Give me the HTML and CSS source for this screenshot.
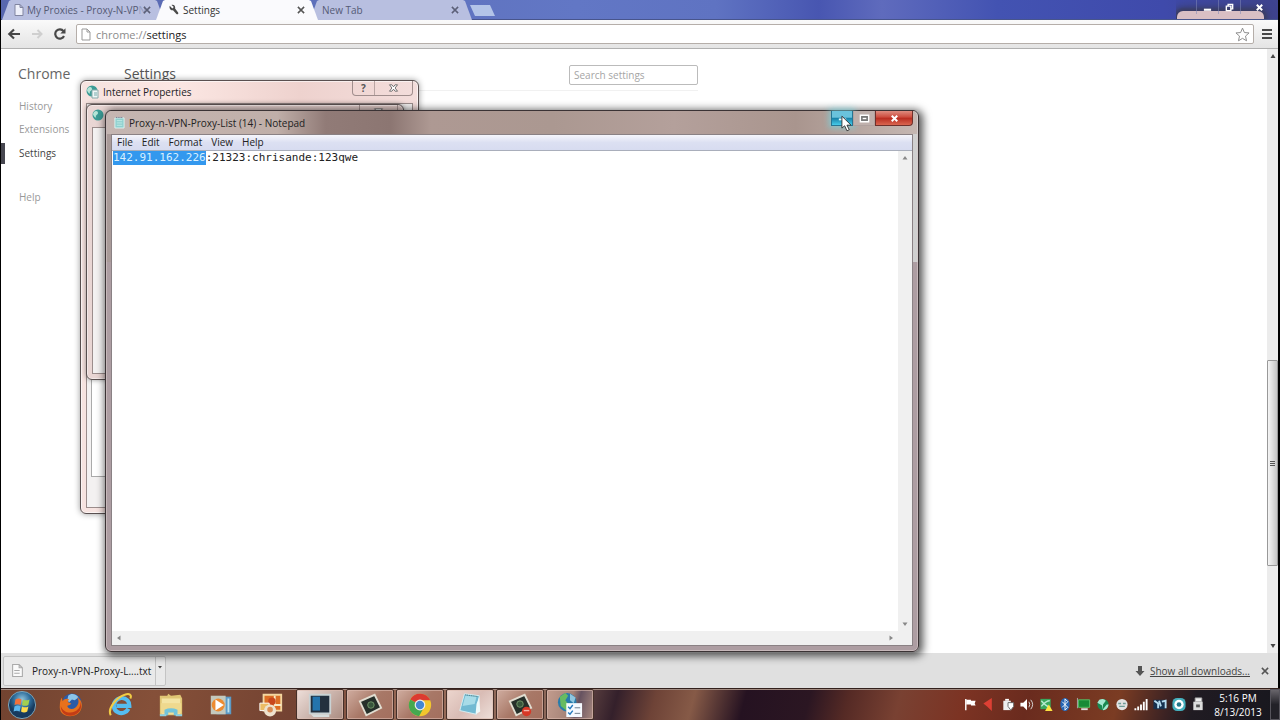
FILE: index.html
```html
<!DOCTYPE html>
<html lang="en">
<head>
<meta charset="utf-8">
<title>Settings</title>
<link rel="stylesheet" href="styles.css">
</head>
<body>
<div class="desktop">
  <main class="browser">
    <header class="tabstrip">
      <div class="tab tab-first">
        <svg class="tab-icon" viewBox="0 0 10 12"><path d="M1 .5h5l3 3v8H1zM6 .5v3h3" fill="#eef0fa" stroke="#8185a0"/></svg>
        <span class="tab-label">My Proxies - Proxy-N-VP<span class="faded">N</span></span>
        <button class="tab-close" aria-label="Close tab"><svg viewBox="0 0 8 8"><path d="M1.500 1.500l5 5M6.500 1.500l-5 5" stroke="#5c6078" stroke-width="1.200"/></svg></button>
      </div>
      <div class="tab active">
        <svg class="tab-icon" viewBox="0 0 10 12"><path d="M1.200 1.800L3.800 4.400 5.300 3 3 .9C5.200.2 7.300 2 6.600 4.600L9.600 8.500c.8 1.200-.6 2.500-1.700 1.500L4.500 6.300C2.300 6.800.4 4.600 1.200 1.800z" fill="#4b4b4b"/></svg>
        <span class="tab-label">Settings</span>
        <button class="tab-close" aria-label="Close tab"><svg viewBox="0 0 8 8"><path d="M1.500 1.500l5 5M6.500 1.500l-5 5" stroke="#555" stroke-width="1.200"/></svg></button>
      </div>
      <div class="tab">
        <span class="tab-label">New Tab</span>
        <button class="tab-close" aria-label="Close tab"><svg viewBox="0 0 8 8"><path d="M1.500 1.500l5 5M6.500 1.500l-5 5" stroke="#5c6078" stroke-width="1.200"/></svg></button>
      </div>
      <button class="new-tab" aria-label="New tab"></button>
      <div class="caption">
        <button aria-label="Minimize"><svg viewBox="0 0 10 10"><path d="M1 7.500h8" stroke="#fff" stroke-width="2.400"/></svg></button>
        <button aria-label="Restore"><svg viewBox="0 0 10 10"><path d="M3.500 3V1.500h5v5H7M1.500 3.500h5v5h-5z" fill="none" stroke="#fff" stroke-width="1.600"/></svg></button>
        <button aria-label="Close"><svg viewBox="0 0 10 10"><path d="M2 2l6 6M8 2L2 8" stroke="#fff" stroke-width="2.200"/></svg></button>
      </div>
    </header>
    <nav class="toolbar">
      <button class="tool" aria-label="Back"><svg viewBox="0 0 14 12"><path d="M13 6H3M7 1.500L2.300 6 7 10.500" fill="none" stroke="#454545" stroke-width="2.200"/></svg></button>
      <button class="tool" aria-label="Forward"><svg viewBox="0 0 14 12"><path d="M2 6h9M7.500 2l4 4-4 4" fill="none" stroke="#cfcfcf" stroke-width="2"/></svg></button>
      <button class="tool" aria-label="Reload"><svg viewBox="0 0 14 12"><path d="M10.500 3.200A4.600 4.600 0 1 0 11 8" fill="none" stroke="#484848" stroke-width="2.200"/><path d="M12.500.3v5.200H7.300z" fill="#484848"/></svg></button>
      <label class="omnibox">
        <svg viewBox="0 0 10 12"><path d="M1 .5h5l3 3v8H1zM6 .5v3h3" fill="#fff" stroke="#999"/></svg>
        <span class="address"><span class="scheme">chrome://</span>settings</span>
        <svg class="star" viewBox="0 0 16 16"><path d="M8 1.200l2 4.700 5 .4-3.800 3.400 1.100 5L8 12.100l-4.300 2.600 1.100-5L1 6.300l5-.4z" fill="#fff" stroke="#888"/></svg>
      </label>
      <button class="tool menu" aria-label="Menu"><svg viewBox="0 0 12 12"><path d="M1 2h10M1 6h10M1 10h10" stroke="#484848" stroke-width="2"/></svg></button>
    </nav>
    <section class="page">
      <aside class="sidebar">
        <h2>Chrome</h2>
        <a href="#history">History</a>
        <a href="#extensions">Extensions</a>
        <a href="#settings" class="current">Settings</a>
        <a href="#help" class="help">Help</a>
      </aside>
      <div class="content">
        <div class="content-head">
          <h1>Settings</h1>
          <input type="search" placeholder="Search settings" aria-label="Search settings">
        </div>
      </div>
      <div class="page-scroll">
        <svg class="arrow" viewBox="0 0 8 8"><path d="M4 2l2.500 4h-5z" fill="#444"/></svg>
        <div class="track-top"></div>
        <div class="thumb"><i></i></div>
        <div class="track-bottom"></div>
        <svg class="arrow" viewBox="0 0 8 8"><path d="M4 6l2.500-4h-5z" fill="#444"/></svg>
      </div>
    </section>
    <footer class="shelf">
      <div class="download">
        <button class="download-file"><svg viewBox="0 0 10 12"><path d="M.5.5h6l3 3v8h-9zM6.500.5v3h3M2 6h5M2 8.500h5" fill="#fafafa" stroke="#aaa"/></svg>Proxy-n-VPN-Proxy-L....txt</button>
        <button class="download-more" aria-label="Download options"><svg viewBox="0 0 8 8"><path d="M2 3h4L4 5.500z" fill="#444"/></svg></button>
      </div>
      <div class="shelf-right">
        <svg viewBox="0 0 10 12"><path d="M3 1h4v5h2.500L5 11 .5 6H3z" fill="#555"/></svg>
        <a href="#downloads">Show all downloads...</a>
        <button class="tab-close" aria-label="Close downloads bar"><svg viewBox="0 0 8 8"><path d="M1.500 1.500l5 5M6.500 1.500l-5 5" stroke="#555" stroke-width="1.200"/></svg></button>
      </div>
    </footer>

    <section class="window props">
      <div class="window-title">
        <svg class="globe" viewBox="0 0 14 14"><circle cx="6" cy="6" r="5.500" fill="#3c9c96"/><path d="M2 3c2-2 4-1 4 1s-3 2-2 4-3-1-3-3z" fill="#b6e5d8"/><path d="M6 5h6v8H6z" fill="#eef6f6" stroke="#8aa"/><path d="M8 8h3M8 10h3" stroke="#7aa"/></svg>
        <h3>Internet Properties</h3>
        <div class="dialog-buttons"><button class="question" aria-label="Help">?</button><button aria-label="Close"><svg viewBox="0 0 12 10"><path d="M1 1h3l2 2.500L8 1h3L8 5l3 4H8L6 6.500 4 9H1l3-4z" fill="#fff" stroke="#555"/></svg></button></div>
      </div>
      <div class="window-body"><div class="sheet"></div></div>
    </section>

    <section class="window lan" aria-label="Dialog">
      <div class="window-title">
        <svg class="globe" viewBox="0 0 14 14"><circle cx="6" cy="6" r="5.500" fill="#3c9c96"/><path d="M2 3c2-2 4-1 4 1s-3 2-2 4-3-1-3-3z" fill="#b6e5d8"/></svg>
        <div class="dialog-buttons"><button aria-label="Close"><svg viewBox="0 0 12 10"><path d="M1 1h10L6 6z" fill="#fff" stroke="#555"/></svg></button></div>
      </div>
      <div class="window-body"></div>
    </section>

    <section class="window notepad">
      <div class="window-title">
        <svg class="note-icon" viewBox="0 0 12 14"><path d="M1 2h10v11H1z" fill="#8fd0cf" stroke="#dff5f2"/><path d="M2 1.500h8" stroke="#557" stroke-dasharray="1 1"/><path d="M3 5h6M3 7.500h6M3 10h6" stroke="#c4ebe6"/></svg>
        <h3>Proxy-n-VPN-Proxy-List (14) - Notepad</h3>
        <div class="note-buttons">
          <button class="min" aria-label="Minimize"><svg viewBox="0 0 12 12"><path d="M2 7h8" stroke="#e4fbff" stroke-width="2"/></svg></button>
          <button class="max" aria-label="Maximize"><svg viewBox="0 0 12 12"><path d="M1.500 2.500h9v7h-9z" fill="#777" stroke="#fff" stroke-width="1.500"/><path d="M4 6h4" stroke="#fff" stroke-width="1.500"/></svg></button>
          <button class="close" aria-label="Close"><svg viewBox="0 0 12 12"><path d="M3 3l6 6M9 3L3 9" stroke="#fff" stroke-width="2.200"/></svg></button>
        </div>
      </div>
      <div class="note-inner">
        <div class="menubar"><button>File</button><button>Edit</button><button>Format</button><button>View</button><button>Help</button></div>
        <div class="editor">
          <textarea id="note" aria-label="Text" spellcheck="false">142.91.162.226:21323:chrisande:123qwe</textarea>
          <div class="vbar"><svg viewBox="0 0 8 8"><path d="M4 2l2.500 3.500h-5z" fill="#888"/></svg><svg viewBox="0 0 8 8"><path d="M4 6l2.500-3.500h-5z" fill="#888"/></svg></div>
          <div class="hbar"><svg viewBox="0 0 8 8"><path d="M2 4l3.500-2.500v5z" fill="#888"/></svg><svg viewBox="0 0 8 8"><path d="M6 4L2.500 1.500v5z" fill="#888"/></svg></div>
          <div class="grip"></div>
        </div>
      </div>
    </section>
    <svg class="cursor" viewBox="0 0 12 18"><path d="M1 1v13l3-2.500L6.500 17l2.500-1.200-2.500-5H11z" fill="#fff" stroke="#333"/></svg>
  </main>

  <footer class="taskbar">
    <button class="start" aria-label="Start"><svg viewBox="0 0 32 32"><defs><radialGradient id="orb" cy=".3"><stop offset="0" stop-color="#8fc4dd"/><stop offset=".6" stop-color="#2e6d9b"/><stop offset="1" stop-color="#173a5e"/></radialGradient></defs><circle cx="16" cy="16" r="14.500" fill="url(#orb)" stroke="#7da7bd"/><path d="M9 10q3.500-2 6.500 0l-1 6q-3-1.500-6.500 0z" fill="#f2713a"/><path d="M17 10q3.500 1.800 7 0l-1.200 6q-3.500 1.800-6.800 0z" fill="#a3cf4f"/><path d="M8 17.500q3.500-1.800 6.500 0l-1 5.500q-3-1.500-6.500 0z" fill="#5cb7ee"/><path d="M16 17.500q3.500 1.800 6.800 0l-1.200 5.500q-3.500 1.800-6.600 0z" fill="#ffd94b"/></svg></button>
    <button class="pin" aria-label="Firefox"><svg viewBox="0 0 28 28"><circle cx="15" cy="12" r="10.500" fill="#2c5ba7"/><path d="M11 4c3-3 9-2 11 2l-4 3-3-1-3 3-2-2z" fill="#8cc4e8"/><path d="M4 6l1 4c2-3 5-3 7-2-1 1-2 2-1 3 2 1 4 1 3 2-2 2-3 1-4 2 1 4 8 5 11-1 2-3 1-7-1-9 5 3 7 8 5 13-2 6-7 8-12 8C5 26 1 21 2 14c0-3 1-6 2-8z" fill="#e8711c"/><path d="M3 15c2 6 9 9 15 6 5-2 7-7 6-11 3 7-1 15-10 15.500C7 26 3 21 3 15z" fill="#c33c16"/></svg></button>
    <button class="pin" aria-label="Internet Explorer"><svg viewBox="0 0 28 28"><path d="M22 18c-2 4-7 6-11 4-5-2-6-8-3-12s9-5 13-1c2 2 2 4 2 6H9" fill="none" stroke="#55bdf0" stroke-width="4.500"/><path d="M3 25C-1 18 9 6 18 3c5-2 8 0 6 4" fill="none" stroke="#f2cc45" stroke-width="2.200"/></svg></button>
    <button class="pin" aria-label="Explorer"><svg viewBox="0 0 28 28"><path d="M2 4h8l1-2 3 2 10-1 2 4v18H2z" fill="#e0c574"/><path d="M4 7h20v17H4z" fill="#f4e4a4"/><path d="M3 12h22v11H3z" fill="#efd98e"/><path d="M7 25v-6q7-3 14 0v6h-4v-3h-6v3z" fill="#72c4da"/><path d="M2 25h7M19 25h7" stroke="#8ccfe0" stroke-width="2"/></svg></button>
    <button class="pin" aria-label="Media Player"><svg viewBox="0 0 28 28"><path d="M9 5h16v19H9z" fill="#5b9ac6"/><path d="M21 7h2v15h-2z" fill="#bde0ee"/><path d="M3 4h16v20H3z" fill="#c4c9bd"/><circle cx="11" cy="14" r="7" fill="#ed8b30"/><path d="M8 8l9 6-9 6z" fill="#fff"/></svg></button>
    <button class="pin" aria-label="Office"><svg viewBox="0 0 28 28"><path d="M6 3h19v17H6z" fill="#dc6d24" stroke="#f3d69f" stroke-width="2"/><path d="M18 4v10h7" fill="none" stroke="#f8e9c8" stroke-width="2"/><circle cx="15" cy="10" r="4" fill="#c9471d"/><path d="M2 12h10v8H2z" fill="#ecbc65" stroke="#fff"/><circle cx="13" cy="20" r="6.500" fill="#eee2ce"/><circle cx="13" cy="19" r="3" fill="#d88c55"/></svg></button>
    <div class="running">
      <button class="task light" aria-label="Remote desktop"><svg viewBox="0 0 28 28"><path d="M3 3h22v20H3z" fill="#23303e" stroke="#c9d2d4" stroke-width="2"/><path d="M6 5h8v15H6z" fill="#2474ad"/><path d="M4 24h20v3H7z" fill="#d7dedd"/></svg></button>
      <button class="task" aria-label="Proxy tool"><svg viewBox="0 0 28 28"><path d="M3 10L19 3l7 14-16 8z" fill="#26302a" stroke="#e1ddd0" stroke-width="2"/><circle cx="15" cy="14" r="3.500" fill="#37553b" stroke="#719669"/></svg></button>
      <button class="task" aria-label="Chrome"><svg viewBox="0 0 28 28"><circle cx="14" cy="14" r="12" fill="#f2c72e"/><path d="M14 14L3.500 8A12 12 0 0 1 25 9H14z" fill="#dc3a31"/><path d="M14 14L3.500 8A12 12 0 0 0 13 26l5-9z" fill="#45a850"/><circle cx="14" cy="14" r="5.800" fill="#eee"/><circle cx="14" cy="14" r="4.500" fill="#4387d2"/></svg></button>
      <button class="task current" aria-label="Notepad"><svg viewBox="0 0 28 28"><path d="M8 2l16 2-3 20-18-4z" fill="#72bad2" stroke="#d5f0f4"/><path d="M9 4l12 1-2 8-13 2z" fill="#a8dce8"/><path d="M20 24l5-3-1-16-3 8z" fill="#eefafa"/><path d="M9 3l14 2" stroke="#577" stroke-dasharray="1 1"/></svg></button>
      <button class="task" aria-label="Proxy recorder"><svg viewBox="0 0 28 28"><path d="M3 10L19 3l7 14-16 8z" fill="#26302a" stroke="#e1ddd0" stroke-width="2"/><circle cx="14" cy="13" r="3.500" fill="#37553b" stroke="#719669"/><circle cx="21" cy="21" r="5" fill="#d73826"/><path d="M18 20h6" stroke="#f6b3a8" stroke-width="1.500"/></svg></button>
      <button class="task dark" aria-label="Internet properties"><svg viewBox="0 0 28 28"><circle cx="11" cy="11" r="10" fill="#287cab"/><path d="M3 5l6-4 3 3-3 5 4 5-3 6-6-5z" fill="#67bb61"/><path d="M14 2l6 4-2 6-4-3z" fill="#8fc6df"/><path d="M10 12h17v15H10z" fill="#f6faff"/><path d="M12 16l2 2 3-4M12 22l2 2 3-4" fill="none" stroke="#2479bd" stroke-width="1.500"/><path d="M19 17h6M19 23h6" stroke="#678"/></svg></button>
    </div>
    <div class="tray">
      <svg viewBox="0 0 16 16"><path d="M3.500 2v12" stroke="#fff" stroke-width="1.500"/><path d="M4 3h5v1h5l-1 3 1 2H9V8H4z" fill="#fff"/></svg>
      <svg viewBox="0 0 16 16"><path d="M11 1L2 7l4 3 5 5z" fill="#dc4034"/></svg>
      <svg viewBox="0 0 16 16"><path d="M3 4h8v10H3z" fill="#eee"/><path d="M5 2h4v2H5z" fill="#fff"/><path d="M8 6h6v4l-3 4-3-4z" fill="#fff" stroke="#666"/></svg>
      <svg viewBox="0 0 16 16"><path d="M1 6h3l4-4v12l-4-4H1z" fill="#fff"/><path d="M10 5q2 3 0 6M12 3q4 5 0 10" fill="none" stroke="#ddd"/></svg>
      <svg viewBox="0 0 16 16"><path d="M2 2h11v11H2z" fill="#38a85e"/><path d="M3 4q5 6 9 7M3 10q5-6 9-6" fill="none" stroke="#b6ead0" stroke-width="1.500"/><path d="M11 8l4 7H7z" fill="#ffe23f"/></svg>
      <svg viewBox="0 0 16 16"><ellipse cx="8" cy="8" rx="5" ry="7" fill="#2464b4"/><path d="M5 5l6 6-3 3V2l3 3-6 6" fill="none" stroke="#fff"/></svg>
      <svg viewBox="0 0 16 16"><path d="M2 3h12v8H2z" fill="#178a36" stroke="#57c66b"/><path d="M5 13h7" stroke="#ddd" stroke-width="2"/><path d="M1 1v11" stroke="#aaa"/></svg>
      <svg viewBox="0 0 16 16"><circle cx="8" cy="8" r="6" fill="#198951"/><path d="M4 3q5-2 7 1L8 8v5l4-5h2q-1 6-6 6l-1-5-5-3z" fill="#a6e8d0"/></svg>
      <svg viewBox="0 0 16 16"><circle cx="8" cy="8" r="6" fill="#e3e3e3"/><path d="M4 7h3M9 7h3M5 10h6" stroke="#6d9b96" stroke-width="1.500"/></svg>
      <svg viewBox="0 0 16 16"><path d="M2 14v-2M5 14v-4M8 14V8M11 14V5M14 14V2" stroke="#fff" stroke-width="2"/></svg>
      <svg viewBox="0 0 16 16"><path d="M1 3h13v10H1z" fill="#163150"/><path d="M2 4l4 3v5M7 4l2 6M10 5l4-1v8" fill="none" stroke="#b6dcf1" stroke-width="2"/></svg>
      <svg viewBox="0 0 16 16"><rect x="1" y="1" width="14" height="14" rx="5" fill="#44afbd"/><circle cx="8" cy="8" r="5" fill="#fff"/><circle cx="8" cy="8" r="2.500" fill="#23778a"/></svg>
      <svg viewBox="0 0 16 16"><path d="M5 1h7v4H5z" fill="#eee" stroke="#aaa"/><path d="M3 5h10v9H3z" fill="#ddd"/><path d="M6 8h4v3H6z" fill="#555"/></svg>
    </div>
    <div class="clock"><time>5:16 PM</time><time>8/13/2013</time></div>
    <button class="show-desktop" aria-label="Show desktop"></button>
  </footer>
</div>
<script src="app.js"></script>
</body>
</html>
```
FILE: styles.css
```css
* { box-sizing: border-box; }
body { margin: 0; background: #000; color: #222; font-family: "Open Sans", "Noto Sans", sans-serif; font-size: 10px; }
button { border: 0; padding: 0; background: none; color: inherit; font: inherit; }
svg { display: block; flex: none; }
h1, h2, h3 { margin: 0; font-weight: 400; }
h3 { font-size: 10px; line-height: 14px; }
a { color: inherit; }

.desktop { display: flex; flex-direction: column; height: 100vh; overflow: hidden; }
.browser { position: relative; flex: 1; min-height: 0; display: flex; flex-direction: column; margin: 0 2px 0 1px; background: #fff; }

.tabstrip { display: flex; height: 20px; padding-left: 1px; background: linear-gradient(90deg, #5867ae, #6277c5 45%, #5f73c2 56%, #4856b1 64%, #5f6bbd 69%, #4353b2 78%, #3f4aab 91%, #3e438e); border-bottom: 1px solid #48558c; }
.tab { display: flex; align-items: center; gap: 4px; width: 162px; height: 20px; margin-right: -8px; padding: 0 12px; background: #b8bfe0; color: #555a75; clip-path: polygon(0 100%, 7px 5%, 9px 0, calc(100% - 9px) 0, calc(100% - 7px) 5%, 100% 100%); }
.tab.active { z-index: 1; background: #fafafd; color: #333; }
.tab-first { gap: 3px; }
.tab-icon { width: 10px; height: 12px; }
.tab.active .tab-icon { width: 11px; }
.tab-label { flex: 1; min-width: 0; white-space: nowrap; }
.faded { color: #959bbc; }
.tab-close { width: 10px; height: 10px; }
.tab-close svg { width: 10px; height: 10px; }
.new-tab { width: 25px; height: 11px; margin: 5px 0 0 6px; background: #b3c4e8; clip-path: polygon(0 0, 80% 0, 100% 100%, 20% 100%); }
.caption { position: relative; display: flex; width: 102px; margin-left: auto; padding-left: 20px; overflow: hidden; }
.caption::before { content: ""; position: absolute; inset: 11px 14px -8px 1px; border-radius: 6px; background: #d9bfc4; box-shadow: 0 0 3px 3px #3b3e66, 0 0 7px 6px #3b3e6688; }
.caption button { position: relative; display: grid; place-items: center; width: 22px; height: 14px; border-left: 1px solid #8289b588; }
.caption button:last-child { width: 38px; }
.caption svg { width: 9px; height: 9px; }

.toolbar { display: flex; align-items: center; height: 29px; padding: 0 3px 0 1px; background: linear-gradient(#fafafa, #e4e4e4); border-bottom: 1px solid #b0b0b0; }
.tool { display: grid; place-items: center; width: 23px; height: 24px; }
.tool svg { width: 14px; height: 12px; }
.omnibox { display: flex; flex: 1; align-items: center; gap: 5px; height: 20px; margin-left: 5px; padding: 0 3px 0 4px; background: #fff; border: 1px solid #b5aea9; border-radius: 2px; font-size: 11px; }
.omnibox svg { width: 10px; height: 13px; }
.omnibox .star { width: 15px; height: 15px; }
.address { flex: 1; }
.scheme { color: #8b8b8b; }
.menu { margin-left: 5px; width: 16px; }
.menu svg { width: 12px; }

.page { flex: 1; min-height: 0; display: flex; }
.sidebar { display: flex; flex-direction: column; gap: 5px; width: 123px; padding-top: 15px; color: #999; }
.sidebar h2 { padding-left: 17px; margin-bottom: 8px; color: #666; font-size: 14px; line-height: 20px; }
.sidebar a { padding-left: 18px; line-height: 18px; text-decoration: none; }
.sidebar .current { padding: 1px 0 2px 14px; border-left: 4px solid #474750; color: #444; }
.sidebar .help { margin-top: 19px; }
.content { flex: 1; }
.content-head { display: flex; justify-content: space-between; width: 100%; max-width: 574px; height: 42px; padding-top: 15px; border-bottom: 1px solid #f1f1f1; }
.content-head h1 { color: #555; font-size: 14px; line-height: 20px; }
.content-head input { width: 129px; height: 20px; margin-top: 1px; padding: 0 4px; border: 1px solid #bbb; border-radius: 2px; background: #fff; font: inherit; appearance: none; }
.content-head input::placeholder { color: #a5a5a5; }
.page-scroll { display: flex; flex-direction: column; align-items: center; width: 11px; background: #ececec; }
.arrow { width: 8px; height: 14px; }
.track-top { flex: 298; }
.thumb { display: grid; place-items: center; flex: 205; width: 100%; border: 1px solid #999; border-radius: 1px; background: linear-gradient(90deg, #f5f5f5, #dedede 50%, #c5c5c5); }
.thumb i { width: 5px; height: 5px; background: repeating-linear-gradient(#555 0 1px, transparent 1px 2px); }
.track-bottom { flex: 73; }

.shelf { display: flex; align-items: center; justify-content: space-between; height: 35px; padding: 0 8px 0 2px; background: #e0e0e0; }
.download { display: flex; height: 30px; border: 1px solid #c4c4c4; border-radius: 2px; background: #e9e9e9; }
.download-file { display: flex; align-items: center; gap: 9px; padding: 0 4px 0 8px; }
.download-file svg { width: 11px; height: 13px; }
.download-more { width: 10px; padding-bottom: 8px; border-left: 1px solid #c4c4c4; }
.download-more svg { width: 8px; height: 8px; }
.shelf-right { display: flex; align-items: center; gap: 5px; color: #444; }
.shelf-right > svg { width: 10px; height: 12px; }
.shelf-right .tab-close { margin-left: 5px; }

.window { position: absolute; display: flex; flex-direction: column; border: 1px solid #5a5050; border-radius: 6px; }
.window-title { display: flex; align-items: center; }
.globe { width: 14px; height: 14px; }
.window-body { flex: 1; border: 1px solid #9b8d8c; background: #f3f1f1; }
.props { left: 79px; top: 80px; width: 339px; height: 434px; padding: 0 5px 5px; background: linear-gradient(90deg, #f6e3e0, #fbe6e2 30%, #eed2ce 65%, #f3dddb); box-shadow: 0 0 6px #0006, inset 0 0 0 1px #fff9; }
.props .window-title { height: 22px; gap: 3px; }
.dialog-buttons { display: flex; align-self: flex-start; height: 15px; margin-left: auto; border: 1px solid #a08e8d; border-top: 0; border-radius: 0 0 4px 4px; color: #555; }
.dialog-buttons button { display: grid; place-items: center; width: 37px; }
.dialog-buttons .question { width: 22px; border-right: 1px solid #b9a5a3; font-weight: 700; line-height: 14px; }
.dialog-buttons svg { width: 11px; height: 8px; }
.sheet { width: 300px; height: 373px; margin-left: 4px; border: 1px solid #aaa; background: #fff; }
.lan { left: 85px; top: 104px; width: 318px; height: 276px; padding: 0 5px 5px; background: linear-gradient(90deg, #e9d6d4, #d9c3c0); box-shadow: 0 0 5px #0006, inset 0 0 0 1px #fff7; }
.lan .window-title { height: 22px; }

.notepad { left: 104px; top: 110px; width: 814px; height: 542px; padding: 0 5px 5px; border-color: #3b3335; background: linear-gradient(#a8989700 0 28%, #ad9da2 28%), linear-gradient(90deg, #a99a98, #d0d0d0); box-shadow: 2px 2px 9px 2px #000a, inset 0 0 0 1px #d8caca99; }
.notepad .window-title { height: 23px; margin: 0 -4px; padding-left: 7px; gap: 4px; border-radius: 5px 5px 0 0; background: linear-gradient(90deg, #c5b6b2 0, #c0afa9 21%, #917b77 27%, #8c7672 35%, #ae9993 40%, #ab9891 55%, #b4a09b 70%, #a9958e 85%, #c5b7b2); color: #222; }
.note-icon { width: 11px; height: 13px; }
.note-buttons { display: flex; align-self: flex-start; height: 15px; margin: 0 4px 0 auto; }
.note-buttons button { display: grid; place-items: center; width: 22px; border: 1px solid #746868; border-top: 0; }
.note-buttons svg { width: 11px; height: 11px; }
.note-buttons .min { border-color: #277593; background: linear-gradient(#6ac3dc 45%, #167fa6 50%, #46ccea); box-shadow: 0 0 6px 2px #70d9e5aa; }
.note-buttons .max { background: #bfb0ac; border-color: #b0a19e; }
.note-buttons .close { width: 38px; border-color: #6f302b; background: linear-gradient(#df8c7f, #cc4a3c 45%, #b82b1f 50%, #da6650); border-radius: 0 0 4px; }
.note-inner { flex: 1; min-height: 0; display: flex; flex-direction: column; border: 1px solid #8a8184; background: #fff; }
.menubar { display: flex; gap: 9px; height: 16px; padding-left: 5px; background: linear-gradient(#f6f6fc, #dce0f2 50%, #d7dcf0); border-bottom: 1px solid #a9aebb; }
.menubar button { line-height: 15px; }
.editor { flex: 1; min-height: 0; display: grid; grid-template: 1fr 14px / 1fr 14px; }
.editor textarea { width: 100%; height: 100%; padding: 0 1px; border: 0; outline: 0; resize: none; overflow: hidden; background: #fff; color: #222; font: 11px/14px "DejaVu Sans Mono", monospace; }
.editor textarea::selection { background: #3398ee; color: #d8f0ff; }
.vbar, .hbar, .grip { background: #f0f0f0; }
.vbar, .hbar { display: flex; justify-content: space-between; align-items: center; padding: 3px; }
.vbar { flex-direction: column; }
.vbar svg, .hbar svg { width: 8px; height: 8px; }
.cursor { position: absolute; left: 840px; top: 115px; width: 11px; height: 17px; }

.taskbar { display: flex; height: 32px; margin-left: 1px; border-top: 1px solid #33211d; box-shadow: inset 0 1px #a18a80; background: linear-gradient(105deg, #724330 0, #855039 12%, #744332 23%, #996b58 32%, #8b6759 43%, #34202b 48%, #6e4337 51%, #865a47 54%, #251221 58%, #2b1622 63%, #552a25 66%, #794132 70%, #7c3323 75%, #6a2b1e 80%, #7b3c23 87%, #3b2223 91%, #201b22 93%, #17171e); }
.start, .pin, .task { display: grid; place-items: center; }
.start { width: 45px; padding-right: 4px; }
.start svg { width: 30px; height: 30px; }
.pin { width: 50px; }
.pin svg, .task svg { width: 26px; height: 26px; }
.running { display: flex; gap: 2px; }
.task { width: 48px; border: 1px solid #453029; border-radius: 2px; background: linear-gradient(135deg, #d0ada0, #a87867 50%, #a36f5e); box-shadow: inset 0 0 0 1px #ddbdb199; }
.task.light { background: linear-gradient(135deg, #eedfda, #aa8b80); }
.task.current { background: linear-gradient(135deg, #ecd6ce, #d9bcb5 50%, #eee0da); }
.task.dark { background: linear-gradient(105deg, #c29c8e, #a68377 50%, #665260 65%, #a9897e); }
.tray { display: flex; align-items: center; gap: 3px; margin-left: auto; }
.tray svg { width: 16px; height: 15px; }
.clock { display: flex; flex-direction: column; justify-content: center; align-items: center; width: 64px; color: #fff; line-height: 14px; }
.show-desktop { width: 10px; border: 1px solid #56545c; background: linear-gradient(#68656b, #222128 50%); }
```
FILE: app.js
```javascript
const note = document.getElementById("note");
note.focus();
note.setSelectionRange(0, 14);
```
